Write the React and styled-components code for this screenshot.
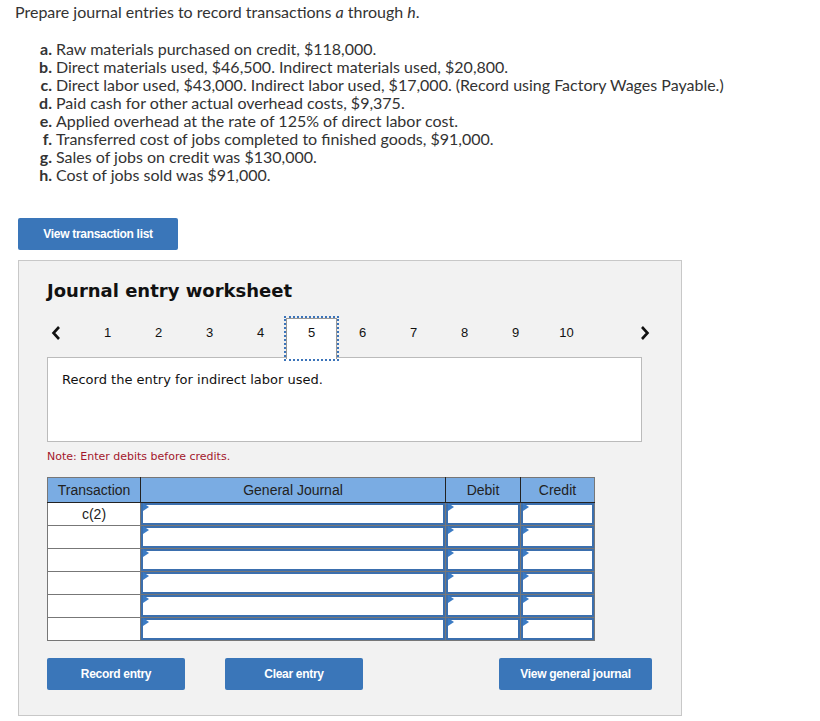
import React from "react";
import styled, { createGlobalStyle } from "styled-components";

const items = [
  ["a.", "Raw materials purchased on credit, $118,000."],
  ["b.", "Direct materials used, $46,500. Indirect materials used, $20,800."],
  ["c.", "Direct labor used, $43,000. Indirect labor used, $17,000. (Record using Factory Wages Payable.)"],
  ["d.", "Paid cash for other actual overhead costs, $9,375."],
  ["e.", "Applied overhead at the rate of 125% of direct labor cost."],
  ["f.", "Transferred cost of jobs completed to finished goods, $91,000."],
  ["g.", "Sales of jobs on credit was $130,000."],
  ["h.", "Cost of jobs sold was $91,000."],
];

const tabs = [1, 2, 3, 4, 5, 6, 7, 8, 9, 10];
const rows = ["c(2)", "", "", "", "", ""];

const App = () => (
  <Page>
    <GlobalStyle />
    <Intro>
      Prepare journal entries to record transactions <em>a</em> through <em>h</em>.
    </Intro>
    <List>
      {items.map(([letter, text]) => (
        <Item key={letter}>
          <Letter>{letter}</Letter>
          <span>{text}</span>
        </Item>
      ))}
    </List>

    <BlueButton $width={160}>View transaction list</BlueButton>

    <Worksheet>
      <Title>Journal entry worksheet</Title>
      <TabRow>
        <Arrow>
          <Chevron dir="left" />
        </Arrow>
        {tabs.map((t) => (
          <Tab key={t} $active={t === 5}>
            {t}
          </Tab>
        ))}
        <Arrow $right>
          <Chevron dir="right" />
        </Arrow>
      </TabRow>
      <Prompt>Record the entry for indirect labor used.</Prompt>
      <Note>Note: Enter debits before credits.</Note>

      <Table>
        <colgroup>
          <col style={{ width: 93 }} />
          <col style={{ width: 305 }} />
          <col style={{ width: 75 }} />
          <col style={{ width: 74 }} />
        </colgroup>
        <thead>
          <tr>
            <Th>Transaction</Th>
            <Th>General Journal</Th>
            <Th>Debit</Th>
            <Th $last>Credit</Th>
          </tr>
        </thead>
        <tbody>
          {rows.map((r, i) => (
            <tr key={i}>
              <TransCell>{r}</TransCell>
              <InputCell>
                <Field />
              </InputCell>
              <InputCell>
                <Field />
              </InputCell>
              <InputCell>
                <Field />
              </InputCell>
            </tr>
          ))}
        </tbody>
      </Table>

      <Actions>
        <BlueButton $width={138}>Record entry</BlueButton>
        <BlueButton $width={138}>Clear entry</BlueButton>
        <BlueButton $width={153} $push>
          View general journal
        </BlueButton>
      </Actions>
    </Worksheet>
  </Page>
);

const Chevron = ({ dir }) => (
  <svg width="10" height="16" viewBox="0 0 10 16">
    <path
      d={dir === "left" ? "M8 2 L2.5 8 L8 14" : "M2 2 L7.5 8 L2 14"}
      fill="none"
      stroke="#111"
      strokeWidth="2.6"
    />
  </svg>
);

export default App;

const GlobalStyle = createGlobalStyle`
  body {
    margin: 0;
    background: #fff;
  }
`;

const Page = styled.div`
  padding: 3px 0 6px 15px;
  font-family: Lato, "Liberation Sans", sans-serif;
  color: #333;
`;

const Intro = styled.p`
  margin: 0;
  font-size: 16px;
  line-height: 18px;
`;

const List = styled.div`
  margin: 19px 0 0 21px;
`;

const Item = styled.div`
  display: grid;
  grid-template-columns: 16px 1fr;
  column-gap: 4px;
  font-size: 16px;
  line-height: 18px;
`;

const Letter = styled.b`
  text-align: right;
  font-weight: 700;
`;

const BlueButton = styled.button`
  width: ${(p) => p.$width}px;
  height: 32px;
  margin: ${(p) => (p.$push ? "0 0 0 auto" : "0")};
  border: none;
  border-radius: 2px;
  background: #3a76b9;
  color: #fff;
  font-family: "Liberation Sans", Arial, sans-serif;
  font-weight: 700;
  font-size: 12px;
  letter-spacing: -0.3px;
  padding: 0;

  ${Page} > & {
    display: block;
    margin: 34px 0 0 3px;
  }
`;

const Worksheet = styled.section`
  width: 634px;
  margin: 10px 0 0 3px;
  padding: 18px 0 25px 28px;
  background: #f2f2f2;
  border: 1px solid #c8c8c8;
`;

const Title = styled.h2`
  margin: 0;
  font-family: "DejaVu Sans", Verdana, sans-serif;
  font-weight: 700;
  font-size: 18px;
  line-height: 24px;
  color: #111;
`;

const TabRow = styled.div`
  display: flex;
  align-items: flex-start;
  width: 603px;
  height: 39px;
  margin-top: 15px;
`;

const Arrow = styled.div`
  width: 35px;
  height: 30px;
  display: flex;
  align-items: center;
  justify-content: ${(p) => (p.$right ? "flex-end" : "flex-start")};
  padding-left: ${(p) => (p.$right ? "0" : "4px")};
  box-sizing: border-box;
  margin-left: ${(p) => (p.$right ? "auto" : "0")};
`;

const Tab = styled.div`
  width: 51px;
  height: 39px;
  box-sizing: border-box;
  padding-top: 7px;
  text-align: center;
  font-family: "Liberation Sans", Arial, sans-serif;
  font-size: 13px;
  line-height: 16px;
  color: #111;
  ${(p) =>
    p.$active &&
    `
    position: relative;
    z-index: 1;
    height: 41px;
    padding-top: 6px;
    background: #fff;
    border: 1px solid #999;
    border-bottom: none;
    outline: 2px dotted #3b74ba;
  `}
`;

const Prompt = styled.div`
  width: 595px;
  height: 85px;
  box-sizing: border-box;
  background: #fff;
  border: 1px solid #bbb;
  padding: 14px 0 0 14px;
  font-family: "DejaVu Sans", Tahoma, sans-serif;
  font-size: 13px;
  color: #111;
`;

const Note = styled.p`
  margin: 8px 0 0;
  font-family: "DejaVu Sans", Tahoma, sans-serif;
  font-size: 11px;
  line-height: 14px;
  color: #a3172c;
`;

const Table = styled.table`
  margin-top: 13px;
  width: 547px;
  border-collapse: collapse;
  table-layout: fixed;
  border: 1px solid #777;
  font-family: "Liberation Sans", Arial, sans-serif;
  font-size: 14px;
`;

const Th = styled.th`
  height: 24px;
  padding: 0;
  background: #7aace3;
  color: #222;
  font-weight: 400;
  border-bottom: 1px solid #222;
  border-right: 1px solid ${(p) => (p.$last ? "#777" : "#222")};
`;

const TransCell = styled.td`
  height: 22px;
  padding: 0;
  background: #fff;
  border: 1px solid #777;
  text-align: center;
  vertical-align: top;
  line-height: 22px;
  color: #222;
`;

const InputCell = styled.td`
  height: 22px;
  padding: 0;
  border: 1px solid #777;
`;

const Field = styled.div`
  position: relative;
  height: 22px;
  box-sizing: border-box;
  background: #fff;
  border: 2px solid #3b6fae;

  &::before {
    content: "";
    position: absolute;
    top: 0;
    left: 0;
    border-top: 4px solid transparent;
    border-bottom: 4px solid transparent;
    border-left: 6px solid #3b7bc4;
    margin-top: -2px;
  }
`;

const Actions = styled.div`
  display: flex;
  gap: 40px;
  width: 605px;
  margin-top: 17px;
`;
